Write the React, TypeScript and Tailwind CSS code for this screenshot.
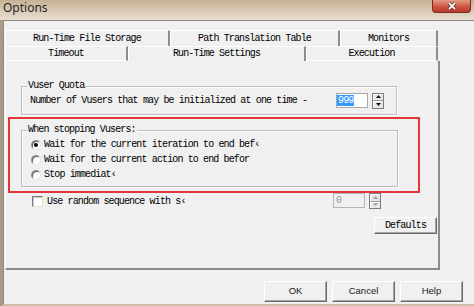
import React from "react";

const mono =
  "font-['Liberation_Mono',monospace] text-[10px] leading-[12px] tracking-[-0.87px] text-black whitespace-nowrap";

function Arrow({ up, disabled }: { up?: boolean; disabled?: boolean }) {
  return (
    <svg width="5" height="3" viewBox="0 0 5 3">
      <polygon
        points={up ? "0,3 5,3 2.5,0" : "0,0 5,0 2.5,3"}
        fill={disabled ? "#a3a3a3" : "#111"}
      />
    </svg>
  );
}

function Spinner({ disabled }: { disabled?: boolean }) {
  return (
    <div className="w-[12px] h-[16px] flex flex-col border border-[#7c7c7c] bg-[#e6e6e6] shrink-0">
      <div className="flex-1 flex items-center justify-center border-b border-[#9a9a9a] shadow-[inset_1px_1px_0_#fff]">
        <Arrow up disabled={disabled} />
      </div>
      <div className="flex-1 flex items-center justify-center shadow-[inset_1px_1px_0_#fff]">
        <Arrow disabled={disabled} />
      </div>
    </div>
  );
}

function Radio({ checked }: { checked?: boolean }) {
  return (
    <span className="w-[10px] h-[10px] rounded-full bg-white border border-t-[#8d8d8d] border-l-[#8d8d8d] border-r-[#e3e3e3] border-b-[#e3e3e3] shadow-[inset_1px_1px_0_#5a5a5a] flex items-center justify-center shrink-0">
      {checked ? <span className="w-[4px] h-[4px] rounded-full bg-black" /> : null}
    </span>
  );
}

function Tab({
  label,
  w,
  selected,
  bottom,
}: {
  label: string;
  w: string;
  selected?: boolean;
  bottom?: boolean;
}) {
  return (
    <div
      className={`${w} h-full flex items-center justify-center border-t border-l border-t-white border-l-white border-r-2 border-r-[#8c8c8c] ${
        bottom && !selected ? "border-b border-b-white" : ""
      } ${mono}`}
    >
      {label}
    </div>
  );
}

function WinButton({ label }: { label: string }) {
  return (
    <div className="w-[63px] h-[21px] flex items-center justify-center border border-t-white border-l-white border-r-[#6a6a6a] border-b-[#6a6a6a] shadow-[inset_-1px_-1px_0_#a6a6a6] bg-[#f0f0f0] font-['Liberation_Sans',sans-serif] text-[9.5px] text-[#1a1a1a]">
      {label}
    </div>
  );
}

export default function App() {
  return (
    <div className="w-[474px] h-[306px] overflow-hidden flex flex-col bg-[#cdbda8]">
      {/* title bar */}
      <div className="h-[20px] shrink-0 flex bg-gradient-to-b from-[#c6b195] via-[#d8c9b5] to-[#e7ddd0]">
        <span className="pl-[3px] font-['Noto_Sans',sans-serif] text-[12px] leading-[16px] text-[#262626]">
          Options
        </span>
        <span className="ml-auto mr-[3px] w-[39px] h-[13px] rounded-b-[4px] border border-t-0 border-[#7e2c20] bg-gradient-to-b from-[#e39a86] via-[#cf5a45] to-[#b8392a] flex items-center justify-center">
          <svg width="10" height="8" viewBox="0 0 10 8">
            <path d="M2 1 L8 7 M8 1 L2 7" stroke="#5a2018" strokeWidth="3.2" />
            <path d="M2 1 L8 7 M8 1 L2 7" stroke="#fff" strokeWidth="1.8" />
          </svg>
        </span>
      </div>

      <div className="flex flex-1 min-h-0">
        <div className="w-[3px] shrink-0 bg-[#a99985]" />
        <div className="flex-1 flex flex-col bg-[#f0f0f0] border-t border-l border-[#8f8a83] pl-[1px] pt-[9px] mb-[2px]">
          {/* tabs */}
          <div className="flex h-[16px]">
            <Tab label="Run-Time File Storage" w="w-[165px]" />
            <Tab label="Path Translation Table" w="w-[170px]" />
            <Tab label="Monitors" w="w-[98px]" />
          </div>
          <div className="flex h-[15px]">
            <Tab label="Timeout" w="w-[123px]" bottom />
            <Tab label="Run-Time Settings" w="w-[178px]" selected bottom />
            <Tab label="Execution" w="w-[132px]" bottom />
          </div>

          {/* panel */}
          <div className="w-[435px] h-[209px] shrink-0 flex flex-col border-l border-l-white border-r-2 border-r-[#8c8c8c] border-b-2 border-b-[#8c8c8c]">
            {/* Vuser Quota */}
            <div className="relative mt-[25px] ml-[15px] w-[376px] h-[29px] border border-[#bdbdbd] shadow-[inset_1px_1px_0_#fff,1px_1px_0_#fff] flex items-center pl-[8px]">
              <span className={`absolute -top-[7px] left-[5px] px-[1px] bg-[#f0f0f0] ${mono}`}>
                Vuser Quota
              </span>
              <span className={`w-[306px] shrink-0 ${mono}`}>
                Number of Vusers that may be initialized at one time -
              </span>
              <div className="w-[32px] h-[15px] shrink-0 bg-white border border-[#a8a8a8] flex items-center">
                <span className="bg-[#3399ff] text-white font-['Liberation_Mono',monospace] text-[10px] leading-[11px] tracking-[-0.87px] px-[1px]">
                  999
                </span>
              </div>
              <div className="ml-[4px]">
                <Spinner />
              </div>
            </div>

            {/* highlighted stop group */}
            <div className="mt-[2px] ml-[2px] w-[412px] h-[76px] shrink-0 border-2 border-[#e3363b]">
              <div className="relative mt-[11px] ml-[11px] w-[377px] h-[57px] border border-[#bdbdbd] shadow-[inset_1px_1px_0_#fff,1px_1px_0_#fff] flex flex-col pt-[6px] pl-[9px]">
                <span className={`absolute -top-[7px] left-[5px] px-[1px] bg-[#f0f0f0] ${mono}`}>
                  When stopping Vusers:
                </span>
                <div className="h-[15px] flex items-center gap-[3px]">
                  <Radio checked />
                  <span className={mono}>Wait for the current iteration to end bef‹</span>
                </div>
                <div className="h-[15px] flex items-center gap-[3px]">
                  <Radio />
                  <span className={mono}>Wait for the current action to end befor</span>
                </div>
                <div className="h-[15px] flex items-center gap-[3px]">
                  <Radio />
                  <span className={mono}>Stop immediat‹</span>
                </div>
              </div>
            </div>

            {/* random sequence */}
            <div className="h-[17px] ml-[26px] flex items-center shrink-0">
              <span className="w-[11px] h-[11px] shrink-0 bg-white border border-t-[#7d7d7d] border-l-[#7d7d7d] border-r-[#e0e0e0] border-b-[#e0e0e0] shadow-[inset_1px_1px_0_#c8c8c8]" />
              <span className={`w-[290px] shrink-0 pl-[4px] ${mono}`}>
                Use random sequence with s‹
              </span>
              <div className="self-start w-[32px] h-[15px] shrink-0 bg-[#f0f0f0] border border-[#b4b4b4] flex items-center pl-[2px]">
                <span className="font-['Liberation_Mono',monospace] text-[10px] leading-[11px] text-[#9a9a9a]">
                  0
                </span>
              </div>
              <div className="ml-[4px] self-start">
                <Spinner disabled />
              </div>
            </div>

            {/* defaults */}
            <div
              className={`mt-[7px] ml-[368px] w-[63px] h-[17px] shrink-0 flex items-center justify-center border border-t-white border-l-white border-r-[#6a6a6a] border-b-[#6a6a6a] shadow-[inset_-1px_-1px_0_#a6a6a6] ${mono}`}
            >
              Defaults
            </div>
          </div>

          {/* dialog buttons */}
          <div className="mt-[11px] pl-[259px] flex gap-[5px]">
            <WinButton label="OK" />
            <WinButton label="Cancel" />
            <WinButton label="Help" />
          </div>
        </div>
      </div>
    </div>
  );
}
